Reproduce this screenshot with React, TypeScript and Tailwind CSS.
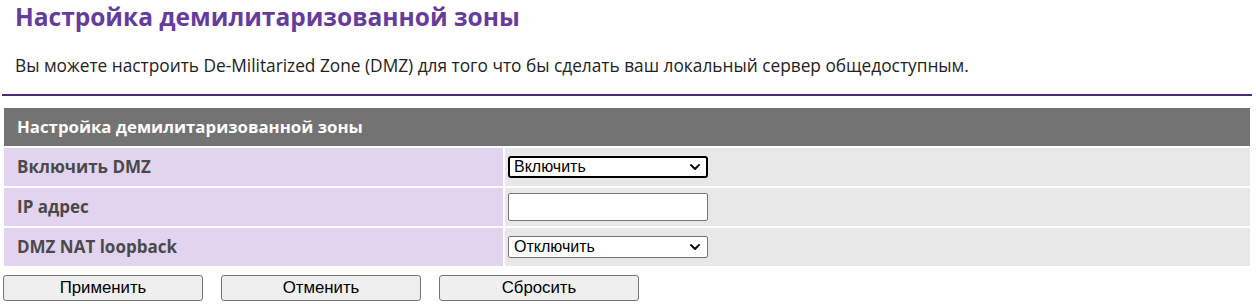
import React from "react";

const sans = { fontFamily: '"Open Sans", "Noto Sans", sans-serif' };
const arial = { fontFamily: '"Liberation Sans", Arial, sans-serif' };

function Chevron() {
  return (
    <svg width="10" height="6" viewBox="0 0 10 6" className="shrink-0">
      <path d="M1 1 L5 5 L9 1" fill="none" stroke="#000" strokeWidth="1.8" strokeLinecap="round" strokeLinejoin="round" />
    </svg>
  );
}

function FakeSelect({ value, focused }: { value: string; focused?: boolean }) {
  return (
    <div
      className={`w-[200px] h-[22px] bg-white flex items-center justify-between pl-[4px] pr-[6px] text-[16px] text-black ${
        focused ? "border-2 border-black rounded-[3px]" : "border border-[#767676] rounded-[2px] pl-[5px] pr-[7px]"
      }`}
      style={arial}
    >
      <span className="leading-none">{value}</span>
      <Chevron />
    </div>
  );
}

const rows = [
  { label: "Включить DMZ", kind: "select1" },
  { label: "IP адрес", kind: "input" },
  { label: "DMZ NAT loopback", kind: "select2" },
];

export default function App() {
  return (
    <div className="w-[1256px] h-[304px] bg-white overflow-hidden" style={sans}>
      <h1 className="pl-[15px] pt-[1px] text-[24.5px] font-bold text-[#653c9e] leading-[32px]">
        Настройка демилитаризованной зоны
      </h1>
      <p className="pl-[15px] mt-[21px] text-[17.3px] text-[#222] leading-[24px]">
        Вы можете настроить De-Militarized Zone (DMZ) для того что бы сделать ваш локальный сервер общедоступным.
      </p>
      <div className="ml-[2px] w-[1250px] h-[2px] bg-[#4a2a78] mt-[16px]" />
      <div className="ml-[4px] w-[1246px] mt-[12px] grid grid-cols-[499px_1fr] gap-[2px]">
        <div className="col-span-2 h-[38px] bg-[#737373] flex items-center pl-[13px] text-white font-bold text-[16.8px]">
          Настройка демилитаризованной зоны
        </div>
        {rows.map((r) => (
          <React.Fragment key={r.label}>
            <div className="h-[38px] bg-[#e2d4ee] flex items-center pl-[13px] text-[#4a4a4a] font-bold text-[17px]">
              {r.label}
            </div>
            <div className="h-[38px] bg-[#e8e8e8] flex items-center pl-[3px]">
              {r.kind === "select1" && <FakeSelect value="Включить" focused />}
              {r.kind === "input" && (
                <div className="w-[200px] h-[28px] bg-white border border-[#767676] rounded-[2px]" />
              )}
              {r.kind === "select2" && <FakeSelect value="Отключить" />}
            </div>
          </React.Fragment>
        ))}
      </div>
      <div className="flex gap-[18px] ml-[3px] mt-[9px]" style={arial}>
        {["Применить", "Отменить", "Сбросить"].map((b) => (
          <button
            key={b}
            className="w-[200px] h-[26px] bg-[#efefef] border border-[#767676] rounded-[3px] text-[16.8px] text-black flex items-center justify-center"
          >
            {b}
          </button>
        ))}
      </div>
    </div>
  );
}
